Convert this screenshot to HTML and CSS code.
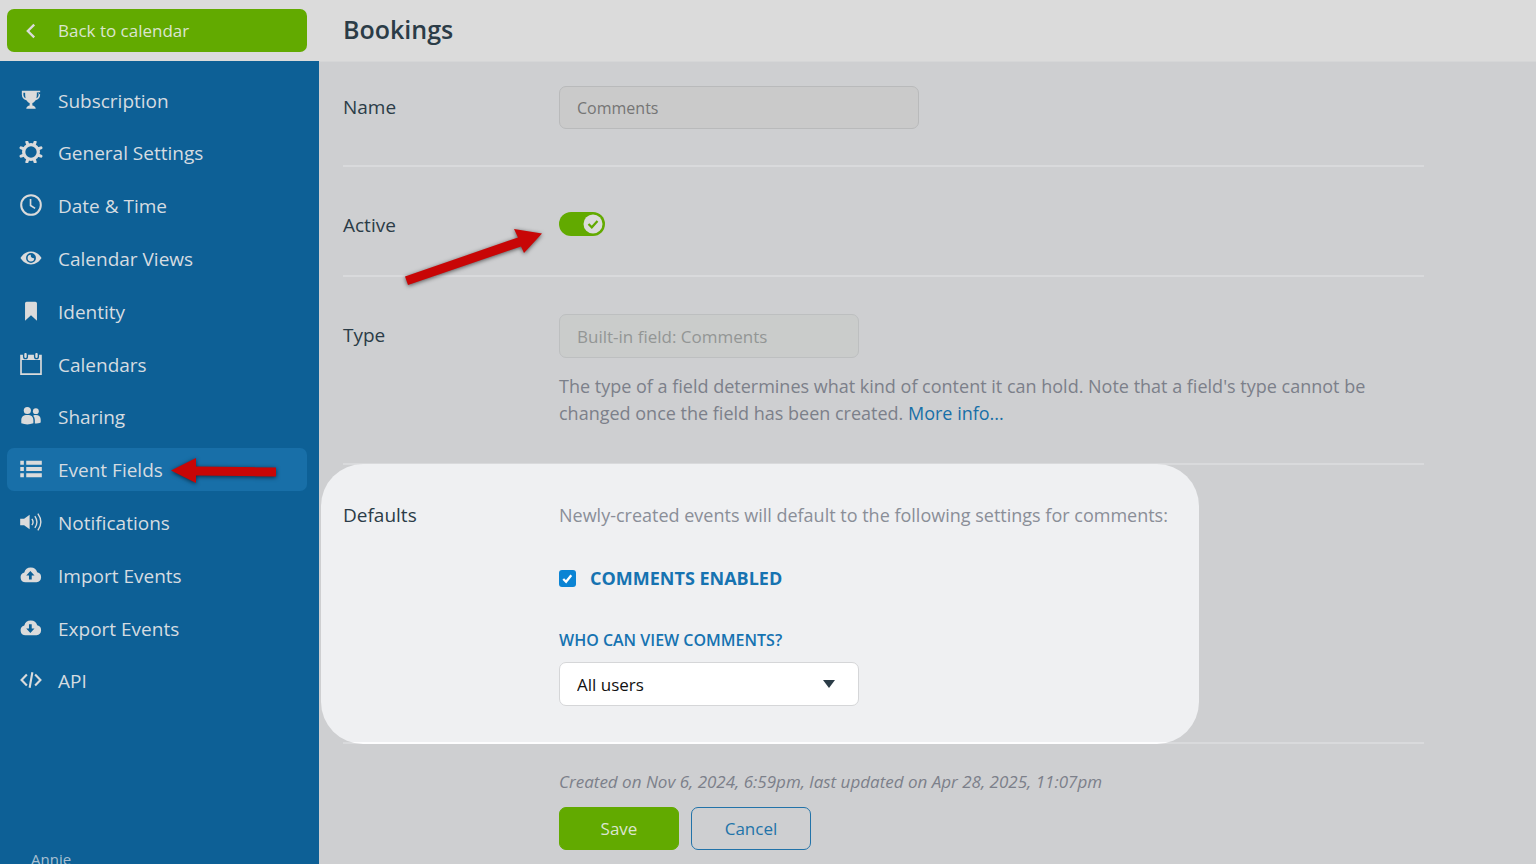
FILE: index.html
```html
<!DOCTYPE html>
<html lang="en">

<head>
    <meta charset="UTF-8">
    <meta name="viewport" content="width=device-width, initial-scale=1.0">
    <title>Bookings</title>
    <link rel="stylesheet" href="styles.css">
</head>

<body>
    <!-- Sidebar -->
    <aside class="sidebar">
        <div class="sidebar-top">
            <a href="#" class="back-button">
                <svg class="icon" viewBox="0 0 24 24"><path d="M15.500 5L8.500 12l7 7" fill="none" stroke="currentColor" stroke-width="2.500"/></svg>
                Back to calendar
            </a>
        </div>
        <nav class="nav">
            <a href="#" class="nav-item">
                <svg class="icon" viewBox="0 0 24 24"><path d="M6 2h12v1.500h4V6c0 3.500-2 5.500-5 6.200-1 1.600-2.200 2.600-3.500 3.100V18c1.800.2 3.300 1.200 3.700 3.500H6.800c.4-2.300 1.900-3.300 3.700-3.500v-2.700C9.200 14.800 8 13.800 7 12.200 4 11.500 2 9.500 2 6V2h4zM3.700 4v2c0 2 .8 3.400 2.500 4.100C5.700 8.500 5.600 6.800 5.600 4zM20.300 4h-1.900c0 2.800-.1 4.500-.6 6.100 1.700-.7 2.500-2.100 2.500-4.100zM22 2v4l-4-2.500V2z" fill="currentColor" fill-rule="evenodd"/></svg>
                Subscription
            </a>
            <a href="#" class="nav-item">
                <svg class="icon" viewBox="0 0 24 24">
                    <circle cx="12" cy="12" r="8" fill="none" stroke="currentColor" stroke-width="3.600"/>
                    <path d="M8.500 4L7.500 1.200M15.500 4l1-2.800M20 8.500l2.800-1M20 15.500l2.800 1M15.500 20l1 2.800M8.500 20l-1 2.800M4 15.500l-2.800 1M4 8.500L1.200 7.500" stroke="currentColor" stroke-width="3.400" stroke-linecap="round"/>
                </svg>
                General Settings
            </a>
            <a href="#" class="nav-item">
                <svg class="icon" viewBox="0 0 24 24"><circle cx="12" cy="12" r="10.700" fill="none" stroke="currentColor" stroke-width="2.200"/><path d="M11.500 5.500v7l5 3.200" fill="none" stroke="currentColor" stroke-width="1.800"/></svg>
                Date &amp; Time
            </a>
            <a href="#" class="nav-item">
                <svg class="icon" viewBox="0 0 24 24"><path d="M.5 12C3 8 7 5 12 5s9 3 11.500 7c-2.500 4-6.500 7-11.500 7S3 16 .5 12zM12 6.600a5.400 5.400 0 1 0 0 10.800 5.400 5.400 0 0 0 0-10.800zM12 8.500c-.8 2 .5 3.800 3.500 3.700a3.600 3.600 0 1 1-3.500-3.700z" fill="currentColor" fill-rule="evenodd"/></svg>
                Calendar Views
            </a>
            <a href="#" class="nav-item">
                <svg class="icon" viewBox="0 0 24 24"><path d="M5.500 3.500Q5.500 1.800 7.200 1.800h9.600q1.700 0 1.700 1.700v19L12 16.500l-6.500 6z" fill="currentColor"/></svg>
                Identity
            </a>
            <a href="#" class="nav-item">
                <svg class="icon" viewBox="0 0 24 24">
                    <path d="M.2 1.800h3V4a2.800 2.800 0 0 0 5.600 0V1.800h6.400V4a2.800 2.800 0 0 0 5.600 0V1.800h3V24H.2zM2 7.500v14.700h20V7.500z" fill="currentColor" fill-rule="evenodd"/>
                    <path d="M6 1.200v3M18 1.200v3" stroke="currentColor" stroke-width="2.600" stroke-linecap="round"/>
                </svg>
                Calendars
            </a>
            <a href="#" class="nav-item">
                <svg class="icon" viewBox="0 0 24 24">
                    <circle cx="8" cy="6" r="3.900" fill="currentColor"/>
                    <circle cx="17.300" cy="6.700" r="3.200" fill="currentColor"/>
                    <path d="M1.400 20v-3c0-4 2-6 6.600-6s6.600 2 6.600 6v3Q8 22.500 1.400 20zM14.300 11.700c1-.6 2-.7 3-.7 3.600 0 5.300 1.800 5.300 5.200V19c-1.600.8-3.600 1.200-6.400 1.200V17c0-2.200-.6-4-1.900-5.300z" fill="currentColor"/>
                </svg>
                Sharing
            </a>
            <a href="#" class="nav-item active" aria-current="page">
                <svg class="icon" viewBox="0 0 24 24"><path d="M.3 5.200h3.900M6.800 5.200h17M.3 12h3.900M6.800 12h17M.3 18.800h3.900M6.800 18.800h17" stroke="currentColor" stroke-width="4.200"/></svg>
                Event Fields
                <svg class="arrow arrow-nav" viewBox="0 0 106 26"><path d="M0 12.500L25 0v8.500l80 1v9l-80-1V25z"/></svg>
            </a>
            <a href="#" class="nav-item">
                <svg class="icon" viewBox="0 0 24 24"><path d="M.2 8.500h4.300L10.500 4v16l-6-4.500H.2z" fill="currentColor"/><path d="M13 8.500q2.500 3.500 0 7M16.200 5.500q4.500 6.500 0 13M19.500 2.800q6.500 9.200 0 18.400" fill="none" stroke="currentColor" stroke-width="1.500"/></svg>
                Notifications
            </a>
            <a href="#" class="nav-item">
                <svg class="icon" viewBox="0 0 24 24"><path d="M6 20a5.500 5.500 0 0 1-1.300-10.800A7.300 7.300 0 0 1 18.800 9 5.600 5.600 0 0 1 18 20zM11.300 7.500L6.800 12.500h3V17h3v-4.500h3z" fill="currentColor" fill-rule="evenodd"/></svg>
                Import Events
            </a>
            <a href="#" class="nav-item">
                <svg class="icon" viewBox="0 0 24 24"><path d="M6 20a5.500 5.500 0 0 1-1.300-10.800A7.300 7.300 0 0 1 18.800 9 5.600 5.600 0 0 1 18 20zM11.300 17.500l4.500-5h-3V8h-3v4.500h-3z" fill="currentColor" fill-rule="evenodd"/></svg>
                Export Events
            </a>
            <a href="#" class="nav-item">
                <svg class="icon" viewBox="0 0 24 24"><path d="M7.500 6L1.700 12l5.800 6M16.500 6l5.800 6-5.800 6M13.500 3.500l-3 17" fill="none" stroke="currentColor" stroke-width="2.300"/></svg>
                API
            </a>
        </nav>
        <div class="user">Annie</div>
    </aside>

    <!-- Main content -->
    <main class="main">
        <header class="header">
            <h1>Bookings</h1>
        </header>

        <form class="form">
            <div class="row row-first">
                <label class="row-label" for="name">Name</label>
                <div class="row-content">
                    <input class="field field-name" id="name" type="text" placeholder="Comments">
                </div>
            </div>

            <div class="row">
                <label class="row-label" for="active">Active</label>
                <div class="row-content">
                    <div class="toggle">
                        <input id="active" type="checkbox" checked>
                        <svg viewBox="0 0 20 20"><circle cx="10" cy="10" r="9.500"/><path d="M5.500 10l3.300 3.300L14.500 7"/></svg>
                    </div>
                </div>
                <svg class="arrow arrow-active" viewBox="0 0 138 56"><path d="M137 4.500L109 0l4 8.500L0 47.500 3 56l113-38.500 3 6.500z"/></svg>
            </div>

            <div class="row">
                <label class="row-label" for="type">Type</label>
                <div class="row-content">
                    <select class="field" id="type" disabled>
                        <option>Built-in field: Comments</option>
                    </select>
                    <p class="help">The type of a field determines what kind of content it can hold. Note that a field's type cannot be changed once the field has been created. <a href="#">More info...</a></p>
                </div>
            </div>

            <div class="row row-defaults">
                <div class="row-label">Defaults</div>
                <div class="row-content">
                    <p class="hint">Newly-created events will default to the following settings for comments:</p>
                    <label class="check">
                        <span class="check-box">
                            <input type="checkbox" checked>
                            <svg viewBox="0 0 18 18"><path d="M4.500 9.500l3 3L13 5.500"/></svg>
                        </span>
                        COMMENTS ENABLED
                    </label>
                    <label class="select-label" for="viewers">WHO CAN VIEW COMMENTS?</label>
                    <div class="select">
                        <select class="field" id="viewers">
                            <option>All users</option>
                        </select>
                        <svg viewBox="0 0 12 8"><path d="M0 0h12L6 8z"/></svg>
                    </div>
                </div>
            </div>

            <div class="footer">
                <p class="dates">Created on Nov 6, 2024, 6:59pm, last updated on Apr 28, 2025, 11:07pm</p>
                <div class="buttons">
                    <button class="button save" type="submit">Save</button>
                    <button class="button cancel" type="button">Cancel</button>
                </div>
            </div>
        </form>
    </main>
</body>

</html>
```
FILE: styles.css
```css
* {
    box-sizing: border-box;
}

body {
    display: flex;
    height: 100vh;
    margin: 0;
    overflow: hidden;
    background-color: #cecfd1;
    color: #2b3c47;
    font-family: "Open Sans", "Noto Sans", sans-serif;
    font-size: 18px;
    line-height: 27px;
}

p {
    margin: 0;
}

a {
    color: #186fa8;
    text-decoration: none;
}

/* Sidebar */
.sidebar {
    flex: none;
    width: 319px;
    background-color: #0d6096;
}

.sidebar-top {
    width: 320px;
    height: 61px;
    padding: 9px 13px 9px 7px;
    background-color: #dbdbdb;
}

.back-button,
.nav-item {
    display: flex;
    align-items: center;
    gap: 15px;
    height: 43px;
    padding: 0 12px;
    border-radius: 7px;
    color: #d5dce1;
}

.back-button {
    background-color: #62aa00;
    color: #dbe5cf;
    font-size: 17px;
}

.nav {
    display: flex;
    flex-direction: column;
    justify-content: space-between;
    height: 641px;
    padding: 17px 12px 0 7px;
}

.nav-item {
    position: relative;
    padding-top: 3px;
    font-size: 19px;
}

.nav-item.active {
    background-color: #186fa8;
}

.icon {
    flex: none;
    width: 24px;
    height: 22px;
    color: #dbdbdb;
}

.nav-item .icon {
    margin-bottom: 3px;
}

.user {
    margin-top: 144px;
    padding-left: 31px;
    color: #a9c0d2;
    font-size: 15px;
}

/* Red arrows over the page */
.arrow {
    position: absolute;
    overflow: visible;
    fill: #c80606;
    filter: drop-shadow(0 1px 2px rgba(0, 0, 0, 0.6));
}

.arrow-nav {
    top: 10px;
    left: 164px;
    width: 106px;
    height: 26px;
}

.arrow-active {
    top: 62px;
    left: 62px;
    width: 138px;
    height: 56px;
}

/* Main content */
.main {
    flex: 1;
}

.header {
    height: 62px;
    padding: 13px 24px;
    border-bottom: 1px solid #d5d6d7;
    background-color: #dbdbdb;
}

h1 {
    margin: 0;
    font-size: 25px;
    font-weight: 600;
    line-height: 33px;
}

.form {
    max-width: 1105px;
    padding-left: 24px;
}

.row {
    position: relative;
    display: flex;
    padding: 37px 0 36px;
    border-bottom: 2px solid #d9dadc;
}

.row-first {
    padding-top: 24px;
}

.row-label {
    flex: none;
    width: 216px;
    padding: 8px 0 0;
    font-size: 19px;
}

.row-content {
    flex: 1;
}

.field {
    display: block;
    width: 300px;
    height: 44px;
    padding: 0 17px;
    border: 1px solid #d5d6d8;
    border-radius: 7px;
    background-color: #fff;
    color: #111;
    font: inherit;
    font-size: 17px;
    appearance: none;
}

.field-name {
    width: 360px;
    height: 43px;
    border-color: #b9babb;
    background-color: #cacaca;
    font-size: 16px;
}

.field-name::placeholder {
    color: #757575;
    opacity: 1;
}

.field:disabled {
    border-color: #bdbfc0;
    background-color: #cacccb;
    color: #939695;
    opacity: 1;
}

.help {
    margin-top: 15px;
    padding-right: 24px;
    color: #7c808a;
}

/* Toggle switch */
.toggle {
    display: grid;
    align-items: center;
    width: 46px;
    margin-top: 8px;
}

.toggle input {
    grid-area: 1 / 1;
    width: 46px;
    height: 24px;
    margin: 0;
    border-radius: 12px;
    background-color: #62aa00;
    appearance: none;
}

.toggle svg {
    grid-area: 1 / 1;
    justify-self: end;
    width: 20px;
    height: 20px;
    margin-right: 2px;
    fill: #dbdbdb;
    pointer-events: none;
}

.toggle path {
    fill: none;
    stroke: #62aa00;
    stroke-width: 2.2;
}

/* Highlighted row */
.row-defaults::before {
    content: "";
    position: absolute;
    top: -1px;
    bottom: -2px;
    left: -22px;
    width: 878px;
    border-radius: 42px;
    background: linear-gradient(#fdfdfe, #fdfdfe) bottom / 100% 2px no-repeat #eff0f2;
}

.row-defaults > * {
    position: relative;
}

.row-defaults .row-label {
    padding-top: 0;
}

.hint {
    color: #8a8e98;
}

.check {
    display: flex;
    align-items: center;
    gap: 14px;
    margin-top: 36px;
    color: #1673b1;
    font-weight: 700;
}

.check-box {
    display: grid;
}

.check-box input {
    grid-area: 1 / 1;
    width: 17px;
    height: 17px;
    margin: 0;
    border-radius: 3px;
    background-color: #0b84d4;
    appearance: none;
}

.check-box svg {
    grid-area: 1 / 1;
    width: 17px;
    height: 17px;
    fill: none;
    stroke: #fff;
    stroke-width: 2.4;
    pointer-events: none;
}

.select-label {
    display: block;
    margin: 35px 0 8px;
    color: #1673b1;
    font-size: 16px;
    font-weight: 600;
}

.select {
    display: grid;
    align-items: center;
    width: 300px;
}

.select .field,
.select svg {
    grid-area: 1 / 1;
}

.select svg {
    justify-self: end;
    width: 12px;
    height: 8px;
    margin-right: 24px;
    fill: #2b3c47;
    pointer-events: none;
}

/* Dates and buttons */
.footer {
    padding: 24px 0 12px 216px;
}

.dates {
    color: #7c808a;
    font-size: 17px;
    font-style: italic;
}

.buttons {
    display: flex;
    gap: 12px;
    margin-top: 12px;
}

.button {
    width: 120px;
    height: 43px;
    border: 1px solid #62aa00;
    border-radius: 7px;
    background-color: #62aa00;
    color: #dbe5cf;
    font: inherit;
    font-size: 17px;
}

.cancel {
    border-color: #2273a9;
    background-color: transparent;
    color: #2273a9;
}
```
